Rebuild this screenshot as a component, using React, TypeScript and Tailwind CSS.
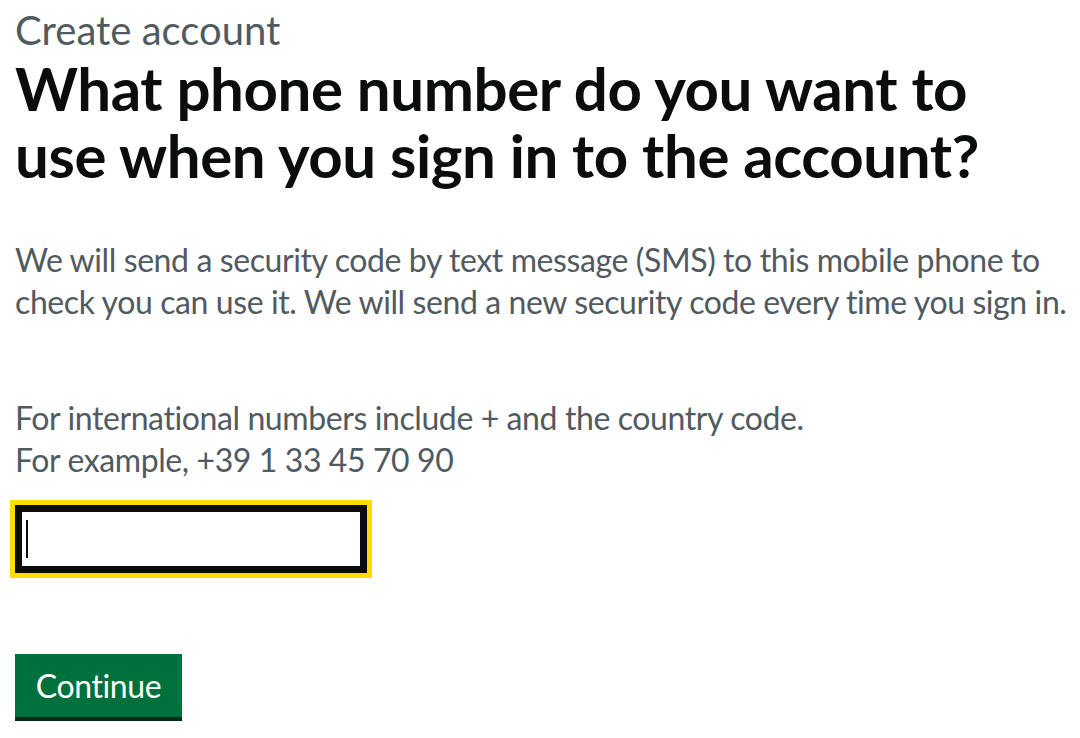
export default function App() {
    return (
        <main className="min-h-screen bg-white pl-[15px] pt-[5px] font-['Lato','Liberation_Sans',sans-serif] [font-variant-ligatures:none]">
            <span className="block text-[40px] leading-[50px] text-[#505a5f]">Create account</span>
            <h1 className="text-[60px] leading-[67px] font-bold tracking-[-0.4px] text-[#0b0c0c] max-w-[1040px]">
                What phone number do you want to use when you sign in to the account?
            </h1>
            <p className="mt-[50px] text-[32px] leading-[42px] tracking-[-0.4px] text-[#505a5f] max-w-[1060px]">
                We will send a security code by text message (SMS) to this mobile phone to check you can use it. We will send a new security code every time you sign in.
            </p>
            <div className="mt-[74px] text-[32px] leading-[42px] tracking-[-0.4px] text-[#505a5f]">
                <p>For international numbers include + and the country code.</p>
                <p>For example, +39 1 33 45 70 90</p>
            </div>
            <div className="relative mt-[24px] w-[352px] h-[68px]">
                <input
                    type="tel"
                    readOnly
                    aria-label="Phone number"
                    className="w-full h-full border-[7px] border-[#0b0c0c] outline outline-[5px] outline-[#ffdd00] bg-white caret-transparent"
                />
                <span className="absolute left-[11px] top-[15px] h-[38px] w-[2px] bg-[#0b0c0c]" />
            </div>
            <button className="mt-[81px] w-[167px] h-[63px] bg-[#00703c] text-white text-[32px] tracking-[-0.4px] shadow-[0_4px_0_#002d18]">
                Continue
            </button>
        </main>
    )
}
